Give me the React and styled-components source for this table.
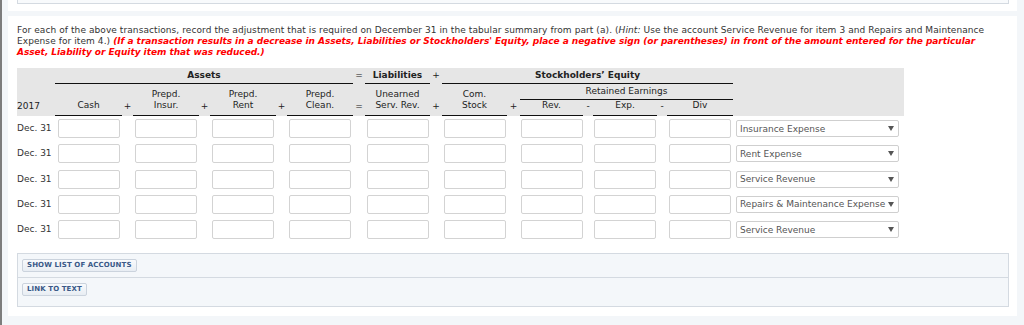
import React from "react";
import styled, { createGlobalStyle } from "styled-components";

const GlobalStyle = createGlobalStyle`
  html, body { margin: 0; padding: 0; background: #f3f6f9; }
  body { font-family: "DejaVu Sans", Verdana, sans-serif; color: #333; }
  * { box-sizing: border-box; }
`;

/* shared column layout for header band and entry rows */
const COLS =
  "38px 67px 11px 66px 11px 66px 11px 66px 12px 65px 12px 65px 13px 63px 10px 64px 10px 66px 171px";

const Page = styled.div`
  border-left: 2px solid #7d7d7d;
  padding: 0 7px 9px 6px;
  height: 325px;
  overflow: hidden;
`;

const PrevPanel = styled.div`
  background: #fff;
  height: 11px;
  padding: 0 8px 0 9px;
`;

const PrevBox = styled.div`
  height: 4px;
  border: 1px solid #d4dae1;
  border-top: none;
  background: #f8fafc;
`;

const Panel = styled.section`
  background: #fff;
  margin-top: 5px;
  height: 300px;
  padding: 8px 8px 9px 9px;
  display: flex;
  flex-direction: column;
`;

const Instructions = styled.p`
  margin: 1px 0 0;
  font-size: 9px;
  line-height: 11px;
  letter-spacing: 0.08px;
  color: #333;
`;

const Warning = styled.strong`
  color: #f00;
  font-style: italic;
  font-weight: bold;
  letter-spacing: -0.04px;
`;

const HeaderBand = styled.div`
  margin-top: 10px;
  width: 887px;
  background: #e6e6e6;
  display: grid;
  grid-template-columns: ${COLS};
  grid-template-rows: 16px 16px 16px;
  font-size: 9px;
  color: #222;
`;

const GroupTitle = styled.div`
  grid-row: ${(p) => p.$row};
  grid-column: ${(p) => p.$col};
  height: 16px;
  border-bottom: 1px solid #111;
  text-align: center;
  line-height: 15px;
  font-weight: ${(p) => (p.$bold ? "bold" : "normal")};
`;

const Op = styled.div`
  grid-row: ${(p) => p.$row};
  grid-column: ${(p) => p.$col};
  text-align: center;
  line-height: ${(p) => (p.$row === 1 ? "15px" : "11px")};
  align-self: ${(p) => (p.$row === 1 ? "start" : "end")};
  padding-bottom: ${(p) => (p.$row === 1 ? "0" : "4px")};
`;

const ColLabel = styled.div`
  grid-row: ${(p) => (p.$short ? "3" : "2 / 4")};
  grid-column: ${(p) => p.$col};
  display: flex;
  flex-direction: column;
  justify-content: flex-end;
  align-items: center;
  text-align: center;
  line-height: 11px;
  padding-bottom: 4px;
  border-bottom: ${(p) => (p.$plain ? "none" : "1px solid #111")};
`;

const YearLabel = styled(ColLabel)`
  grid-row: 1 / 4;
  align-items: flex-start;
`;

const Rows = styled.div`
  display: grid;
  grid-template-columns: ${COLS};
  grid-auto-rows: 19px;
  row-gap: 6.25px;
  padding-top: 3px;
  width: 887px;
`;

const DateCell = styled.div`
  font-size: 9px;
  line-height: 19px;
  color: #333;
  white-space: nowrap;
`;

const Amount = styled.input`
  grid-column: ${(p) => p.$col};
  justify-self: center;
  width: 62px;
  height: 19px;
  border: 1px solid #d3d3d3;
  border-radius: 2px;
  background: #fff;
  padding: 0 3px;
  font: 9px "DejaVu Sans", sans-serif;
`;

const AccountSelect = styled.div`
  grid-column: 19;
  margin-left: 3px;
  margin-top: 1px;
  width: 163px;
  height: 17px;
  border: 1px solid #cfcfcf;
  border-radius: 2px;
  background: #fff;
  display: flex;
  align-items: center;
  justify-content: space-between;
  padding: 0 4px 0 3px;
  font-size: 9px;
  color: #555;
  white-space: nowrap;
`;

const Caret = styled.svg`
  width: 6px;
  height: 5px;
  flex: none;
`;

const Toolbox = styled.div`
  margin-top: 14px;
  border: 1px solid #d4dae1;
  background: #f4f7fa;
  height: 54px;
  display: flex;
  flex-direction: column;
`;

const ToolRow = styled.div`
  display: flex;
  align-items: flex-start;
  padding: 5px 0 0 4px;
  height: ${(p) => p.$h}px;
  flex: none;
  border-bottom: ${(p) => (p.$divider ? "1px solid #d4dae1" : "none")};
`;

const ToolButton = styled.button`
  height: 13px;
  padding: 0 4px;
  border: 1px solid #cbd3dd;
  border-radius: 2px;
  background: linear-gradient(#f8fafc, #e8edf3);
  color: #3a5988;
  font: bold 7px/11px "DejaVu Sans", sans-serif;
  text-transform: uppercase;
  letter-spacing: 0.1px;
  cursor: pointer;
`;

const amountCols = [2, 4, 6, 8, 10, 12, 14, 16, 18];

const entries = [
  "Insurance Expense",
  "Rent Expense",
  "Service Revenue",
  "Repairs & Maintenance Expense",
  "Service Revenue",
];

const labels = [
  { col: 2, lines: ["Cash"] },
  { col: 4, lines: ["Prepd.", "Insur."] },
  { col: 6, lines: ["Prepd.", "Rent"] },
  { col: 8, lines: ["Prepd.", "Clean."] },
  { col: 10, lines: ["Unearned", "Serv. Rev."] },
  { col: 12, lines: ["Com.", "Stock"] },
  { col: 14, lines: ["Rev."], short: true },
  { col: 16, lines: ["Exp."], short: true },
  { col: 18, lines: ["Div"], short: true },
];

const ops = [
  { col: 3, s: "+" },
  { col: 5, s: "+" },
  { col: 7, s: "+" },
  { col: 9, s: "=" },
  { col: 11, s: "+" },
  { col: 13, s: "+" },
  { col: 15, s: "-" },
  { col: 17, s: "-" },
];

export default function App() {
  return (
    <>
      <GlobalStyle />
      <Page>
        <PrevPanel>
          <PrevBox />
        </PrevPanel>
        <Panel>
          <Instructions>
            For each of the above transactions, record the adjustment that is
            required on December 31 in the tabular summary from part (a). (
            <em>Hint:</em> Use the account Service Revenue for item 3 and
            Repairs and Maintenance Expense for item 4.){" "}
            <Warning>
              (If a transaction results in a decrease in Assets, Liabilities or
              Stockholders' Equity, place a negative sign (or parentheses) in
              front of the amount entered for the particular Asset, Liability
              or Equity item that was reduced.)
            </Warning>
          </Instructions>

          <HeaderBand>
            <YearLabel $col={1} $plain>
              2017
            </YearLabel>
            <GroupTitle $row={1} $col="2 / 9" $bold>
              Assets
            </GroupTitle>
            <Op $row={1} $col={9}>
              =
            </Op>
            <GroupTitle $row={1} $col="10" $bold>
              Liabilities
            </GroupTitle>
            <Op $row={1} $col={11}>
              +
            </Op>
            <GroupTitle $row={1} $col="12 / 19" $bold>
              Stockholders’ Equity
            </GroupTitle>
            <GroupTitle $row={2} $col="14 / 19">
              Retained Earnings
            </GroupTitle>
            {labels.map((l) => (
              <ColLabel key={l.col} $col={l.col} $short={l.short}>
                {l.lines.map((t) => (
                  <span key={t}>{t}</span>
                ))}
              </ColLabel>
            ))}
            {ops.map((o) => (
              <Op key={o.col} $row={3} $col={o.col}>
                {o.s}
              </Op>
            ))}
          </HeaderBand>

          <Rows>
            {entries.map((acct, i) => (
              <React.Fragment key={i}>
                <DateCell>Dec. 31</DateCell>
                {amountCols.map((c) => (
                  <Amount key={c} $col={c} type="text" />
                ))}
                <AccountSelect>
                  <span>{acct}</span>
                  <Caret viewBox="0 0 6 5">
                    <path d="M0 0h6L3 5z" fill="#555" />
                  </Caret>
                </AccountSelect>
              </React.Fragment>
            ))}
          </Rows>

          <Toolbox>
            <ToolRow $h={24} $divider>
              <ToolButton>Show List of Accounts</ToolButton>
            </ToolRow>
            <ToolRow $h={29}>
              <ToolButton>Link to Text</ToolButton>
            </ToolRow>
          </Toolbox>
        </Panel>
      </Page>
    </>
  );
}
